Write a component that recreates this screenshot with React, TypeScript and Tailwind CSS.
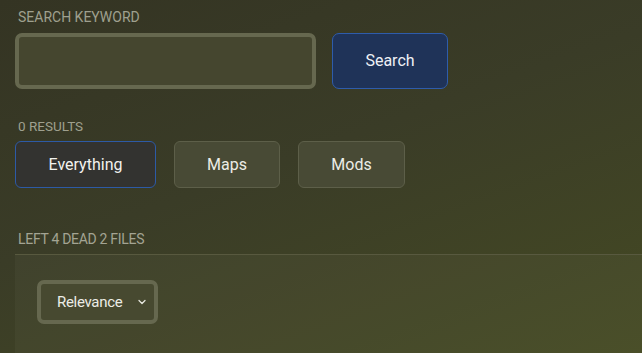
import { ChevronDown } from 'lucide-react';

const tabs = ['Everything', 'Maps', 'Mods'];

export default function App() {
    return (
        <div
            className="w-[642px] h-[353px] overflow-hidden bg-[linear-gradient(160deg,#343423_0%,#3a3c27_45%,#454a23_100%)] font-['Roboto',sans-serif] text-white"
        >
            <div className="pt-[9px] pl-[15px]">
                <div className="pl-[3px] text-[14px] leading-[16px] text-[#9fa08f] uppercase">
                    Search keyword
                </div>

                <div className="flex gap-4 mt-[8px]">
                    <input
                        type="text"
                        className="w-[301px] h-[56px] rounded-[7px] border-4 border-[#66684f] bg-[#45462f] outline-none"
                    />
                    <button className="w-[116px] h-[56px] rounded-[7px] border border-[#2e5cab] bg-[#1f3358] text-[16px] text-[#eef0f5]">
                        Search
                    </button>
                </div>

                <div className="pl-[3px] mt-[29px] text-[13.5px] leading-[16px] text-[#9fa08f] uppercase">
                    0 results
                </div>

                <div className="flex mt-[7px]">
                    {tabs.map((t, i) => (
                        <button
                            key={t}
                            className={
                                i === 0
                                    ? 'w-[141px] h-[47px] rounded-[6px] border border-[#2d5aa6] bg-[#333330] text-[16px] text-[#f2f2ee] mr-[18px]'
                                    : i === 1
                                      ? 'w-[106px] h-[47px] rounded-[6px] border border-[#5d5f49] bg-[#484a35] text-[16px] text-[#ecede6] mr-[18px]'
                                      : 'w-[107px] h-[47px] rounded-[6px] border border-[#5d5f49] bg-[#484a35] text-[16px] text-[#ecede6]'
                            }
                        >
                            {t}
                        </button>
                    ))}
                </div>

                <div className="pl-[3px] mt-[43px] text-[14px] leading-[16px] text-[#a3a493] uppercase tracking-[-0.3px]">
                    Left 4 Dead 2 files
                </div>

                <div className="mt-[7px] h-[120px] border-t border-[#58593f] bg-[#ffffff08] pt-[25px] pl-[22px]">
                    <div className="w-[121px] h-[44px] rounded-[7px] border-4 border-[#66684f] bg-[#474930] flex items-center pl-[16px] pr-[6px]">
                        <span className="flex-1 text-[15px] text-[#ecede6] tracking-[-0.3px]">Relevance</span>
                        <ChevronDown size={12} strokeWidth={2.5} className="text-[#e8e8e0]" />
                    </div>
                </div>
            </div>
        </div>
    );
}
